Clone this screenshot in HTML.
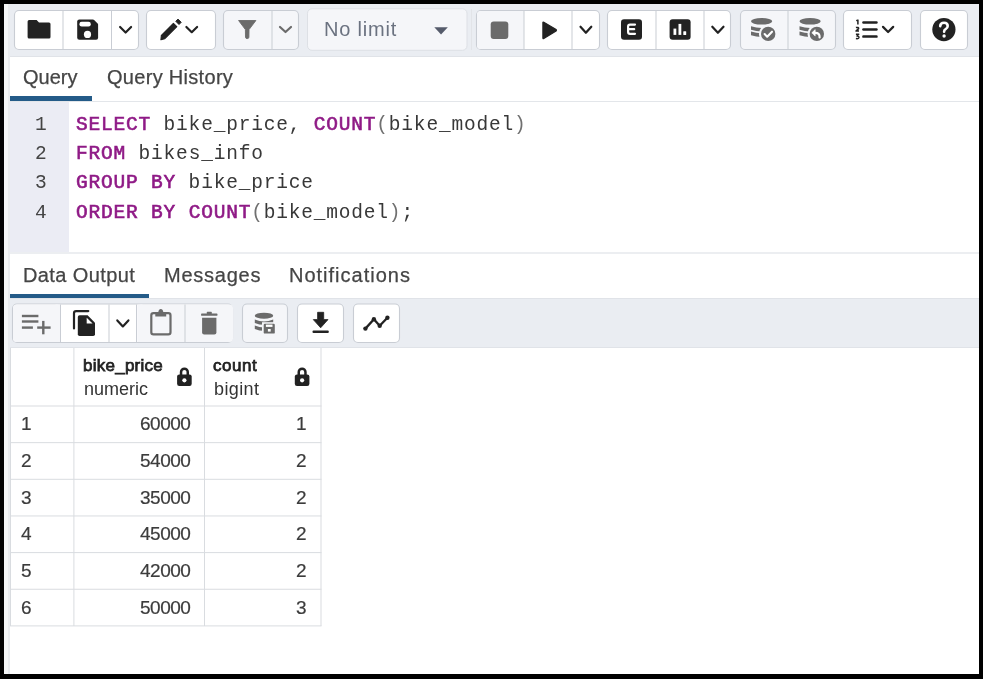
<!DOCTYPE html>
<html><head><meta charset="utf-8">
<style>
*{box-sizing:border-box;margin:0;padding:0}
html,body{width:983px;height:679px;overflow:hidden;background:#000}
body{position:relative;font-family:"Liberation Sans",sans-serif}
div{position:absolute}
.t{white-space:nowrap;line-height:1;-webkit-font-smoothing:antialiased;will-change:transform}
.kw{color:#8f1a86;font-weight:normal;-webkit-text-stroke:0.6px #8f1a86}
.pn{color:#707070}
svg{position:absolute;left:0;top:0}
</style></head><body>
<div style="left:4px;top:4px;width:975px;height:670px;background:#fff;"></div>
<div style="left:4px;top:4px;width:5px;height:670px;background:#f4f5f6;"></div>
<div style="left:8px;top:4px;width:2px;height:670px;background:#e8eaed;"></div>
<div style="left:10px;top:4px;width:969px;height:52px;background:#eaedf2;"></div>
<div style="left:10px;top:56px;width:969px;height:1px;background:#e0e3e8;"></div>
<div style="left:10px;top:101px;width:969px;height:1px;background:#e3e6ea;"></div>
<div style="left:10px;top:96px;width:82px;height:4.5px;background:#245b88;"></div>
<div style="left:10px;top:102px;width:59px;height:150px;background:#ebecf4;"></div>
<div style="left:10px;top:252px;width:969px;height:2px;background:#eceef1;"></div>
<div style="left:10px;top:294px;width:139px;height:4px;background:#245b88;"></div>
<div style="left:10px;top:298px;width:969px;height:50px;background:#eaedf2;"></div>
<div style="left:10px;top:298px;width:969px;height:1px;background:#e0e3e8;"></div>
<div style="left:10px;top:347px;width:969px;height:1px;background:#e0e3e8;"></div>
<svg width="983" height="679" viewBox="0 0 983 679">
<rect x="14.5" y="10.5" width="124" height="39" rx="4.5" fill="#fff" stroke="#c9cdd4" stroke-width="1.1"/>
<rect x="62.5" y="11" width="1" height="38" fill="#c9cdd4"/>
<rect x="111.0" y="11" width="1" height="38" fill="#c9cdd4"/>
<rect x="146.5" y="10.5" width="69" height="39" rx="4.5" fill="#fff" stroke="#c9cdd4" stroke-width="1.1"/>
<rect x="223.5" y="10.5" width="75" height="39" rx="4.5" fill="#f5f6f9" stroke="#c9cdd4" stroke-width="1.1"/>
<rect x="271.5" y="11" width="1" height="38" fill="#c9cdd4"/>
<rect x="307.5" y="8.8" width="159.5" height="41.5" rx="4.5" fill="#f5f6f9" stroke="#dde0e5" stroke-width="1"/>
<rect x="471" y="9" width="1" height="41" fill="#e2e4e8"/>
<rect x="476.5" y="10.5" width="123" height="39" rx="4.5" fill="#fff" stroke="#c9cdd4" stroke-width="1.1"/>
<rect x="477" y="11" width="47" height="38" rx="3.5" fill="#f5f6f9"/>
<rect x="519" y="11" width="5" height="38" fill="#f5f6f9"/>
<rect x="523.5" y="11" width="1" height="38" fill="#c9cdd4"/>
<rect x="571.5" y="11" width="1" height="38" fill="#c9cdd4"/>
<rect x="607.5" y="10.5" width="123" height="39" rx="4.5" fill="#fff" stroke="#c9cdd4" stroke-width="1.1"/>
<rect x="655.5" y="11" width="1" height="38" fill="#c9cdd4"/>
<rect x="703.5" y="11" width="1" height="38" fill="#c9cdd4"/>
<rect x="740.5" y="10.5" width="95" height="39" rx="4.5" fill="#f5f6f9" stroke="#c9cdd4" stroke-width="1.1"/>
<rect x="787.5" y="11" width="1" height="38" fill="#c9cdd4"/>
<rect x="843.5" y="10.5" width="68" height="39" rx="4.5" fill="#fff" stroke="#c9cdd4" stroke-width="1.1"/>
<rect x="920.5" y="10.5" width="47" height="39" rx="4.5" fill="#fff" stroke="#c9cdd4" stroke-width="1.1"/>
<path d="M27.6 21.4 Q27.6 19.9 29.1 19.9 L36.6 19.9 L39 22.6 L49 22.6 Q50.5 22.6 50.5 24.1 L50.5 37.1 Q50.5 38.6 49 38.6 L29.1 38.6 Q27.6 38.6 27.6 37.1 Z" fill="#222"/>
<path d="M77.2 21.6 Q77.2 19.5 79.3 19.5 L93 19.5 Q93.6 19.5 94.1 20 L97.6 23.5 Q98.1 24 98.1 24.7 L98.1 37.8 Q98.1 39.8 96.1 39.8 L79.3 39.8 Q77.2 39.8 77.2 37.8 Z" fill="#222"/>
<rect x="79.4" y="21.8" width="11.4" height="4.7" rx="2.3" fill="#fff"/>
<circle cx="87.5" cy="34.4" r="3.6" fill="#fff"/>
<polyline points="120.1,27 125.6,32.5 131.1,27" fill="none" stroke="#222" stroke-width="2.2" stroke-linecap="round" stroke-linejoin="round"/>
<path d="M161.4 35.3 L173.4 23.3 L176.8 26.7 L164.8 38.7 L160.9 39.8 Z" fill="#222" stroke="#222" stroke-width="1.1" stroke-linejoin="round"/>
<path d="M175.8 21.3 L178 19.1 L181.2 22.3 L179 24.5 Z" fill="#222" stroke="#222" stroke-width="1" stroke-linejoin="round"/>
<polyline points="186.4,27 191.75,32.199999999999996 197.1,27" fill="none" stroke="#222" stroke-width="2.2" stroke-linecap="round" stroke-linejoin="round"/>
<path d="M238.6 20.5 L255.9 20.5 L249 29.6 L248.9 37.2 Q248.8 38.6 247.2 38.6 Q245.6 38.6 245.5 37.2 L245.4 29.6 Z" fill="#6b6b6b" stroke="#6b6b6b" stroke-width="0.9" stroke-linejoin="round"/>
<polyline points="280,27 285.5,32.0 291,27" fill="none" stroke="#6b6b6b" stroke-width="2.2" stroke-linecap="round" stroke-linejoin="round"/>
<path d="M434.3 27.3 L447.8 27.3 L441.05 34.6 Z" fill="#555b6b"/>
<rect x="490.7" y="21.5" width="17.6" height="17.4" rx="3" fill="#6b6b6b"/>
<path d="M542.9 22.6 Q542.9 21.7 543.8 22.2 L556.1 29.5 Q556.8 30.3 556.1 31 L543.8 38.5 Q542.9 39 542.9 38.1 Z" fill="#222" stroke="#222" stroke-width="1.2" stroke-linejoin="round"/>
<polyline points="580.5,26.7 585.9,32.8 591.3,26.7" fill="none" stroke="#222" stroke-width="2.2" stroke-linecap="round" stroke-linejoin="round"/>
<rect x="621" y="19.3" width="21" height="20.5" rx="3" fill="#222"/>
<path d="M635 24.6 L630 24.6 Q628.1 24.6 628.1 26.5 L628.1 31.9 Q628.1 33.8 630 33.8 L635 33.8 M628.4 29.2 L634.2 29.2" fill="none" stroke="#fff" stroke-width="2.2" stroke-linecap="round"/>
<rect x="669.6" y="19.3" width="21" height="20.5" rx="3" fill="#222"/>
<rect x="673.5" y="28.6" width="2.8" height="6.3" fill="#fff"/>
<rect x="678.5" y="23.9" width="2.8" height="11" fill="#fff"/>
<rect x="683.3" y="31.2" width="2.9" height="3.7" rx="0.5" fill="#fff"/>
<polyline points="712.3,26.7 717.9,32.8 723.5,26.7" fill="none" stroke="#222" stroke-width="2.2" stroke-linecap="round" stroke-linejoin="round"/>
<ellipse cx="761.6" cy="21.3" rx="10.6" ry="3.3" fill="#6b6b6b"/>
<path d="M751 26.2 Q761.6 29.6 772.2 26.2 L772.2 29.8 Q761.6 33.2 751 29.8 Z" fill="#6b6b6b"/>
<path d="M751 31.6 Q761.6 35 772.2 31.6 L772.2 35.2 Q761.6 38.6 751 35.2 Z" fill="#6b6b6b"/>
<circle cx="768.2" cy="33.9" r="9.3" fill="#f5f6f9"/>
<circle cx="768.2" cy="33.9" r="7.2" fill="#6b6b6b"/>
<polyline points="764.6,34.1 767.2,36.699999999999996 772.0,31.7" fill="none" stroke="#fff" stroke-width="2.1" stroke-linecap="round" stroke-linejoin="round"/>
<ellipse cx="810.1" cy="21.3" rx="10.6" ry="3.3" fill="#6b6b6b"/>
<path d="M799.5 26.2 Q810.1 29.6 820.7 26.2 L820.7 29.8 Q810.1 33.2 799.5 29.8 Z" fill="#6b6b6b"/>
<path d="M799.5 31.6 Q810.1 35 820.7 31.6 L820.7 35.2 Q810.1 38.6 799.5 35.2 Z" fill="#6b6b6b"/>
<circle cx="816.8" cy="33.9" r="9.3" fill="#f5f6f9"/>
<circle cx="816.8" cy="33.9" r="7.2" fill="#6b6b6b"/>
<path d="M811.8 32.8 L815.1999999999999 29.599999999999998 L815.1999999999999 36.0 Z" fill="#fff" stroke="#fff" stroke-width="0.6" stroke-linejoin="round"/>
<path d="M814.5999999999999 32.8 Q820.0 32.5 819.5999999999999 37.5" fill="none" stroke="#fff" stroke-width="2.2" stroke-linecap="round"/>
<rect x="862.2" y="21.15" width="15.5" height="2.5" rx="1.2" fill="#222"/>
<rect x="862.2" y="28.25" width="15.5" height="2.5" rx="1.2" fill="#222"/>
<rect x="862.2" y="35.35" width="15.5" height="2.5" rx="1.2" fill="#222"/>
<path d="M856.2 20.6 L857.9 20.1 L857.9 24.4" fill="none" stroke="#222" stroke-width="1.5" stroke-linejoin="round"/>
<path d="M855.9 27.6 Q858.9 26.9 858.6 28.6 L856 31.1 L859 31.1" fill="none" stroke="#222" stroke-width="1.5" stroke-linejoin="round"/>
<path d="M855.9 34.3 L858.7 34.3 L857 36.1 Q859.2 36.2 858.9 37.7 Q858.4 39 855.9 38.5" fill="none" stroke="#222" stroke-width="1.5" stroke-linejoin="round"/>
<polyline points="883,26.9 888.1,32.0 893.2,26.9" fill="none" stroke="#222" stroke-width="2.2" stroke-linecap="round" stroke-linejoin="round"/>
<circle cx="943.9" cy="29.55" r="11.6" fill="#222"/>
<path d="M940.2 26.2 Q940.4 22.8 944 22.8 Q947.7 22.8 947.7 26 Q947.7 28 945.6 29.2 Q944.1 30 944.1 31.8" fill="none" stroke="#fff" stroke-width="2.6" stroke-linecap="round"/>
<circle cx="944.1" cy="36" r="1.7" fill="#fff"/>
<rect x="12.5" y="304.0" width="220" height="38.5" rx="4.5" fill="#fff" stroke="#c9cdd4" stroke-width="1.1"/>
<rect x="13" y="304.5" width="47.5" height="37.5" rx="3.5" fill="#f5f6f9"/>
<rect x="55.5" y="304.5" width="5" height="37.5" fill="#f5f6f9"/>
<rect x="137.5" y="304.5" width="95.5" height="37.5" rx="3.5" fill="#f5f6f9"/>
<rect x="137.5" y="304.5" width="5" height="37.5" fill="#f5f6f9"/>
<rect x="60.0" y="304.5" width="1" height="37.5" fill="#c9cdd4"/>
<rect x="108.5" y="304.5" width="1" height="37.5" fill="#c9cdd4"/>
<rect x="136.0" y="304.5" width="1" height="37.5" fill="#c9cdd4"/>
<rect x="184.5" y="304.5" width="1" height="37.5" fill="#c9cdd4"/>
<rect x="242.5" y="304.0" width="45" height="38.5" rx="4.5" fill="#f5f6f9" stroke="#c9cdd4" stroke-width="1.1"/>
<rect x="297.5" y="304.0" width="46" height="38.5" rx="4.5" fill="#fff" stroke="#c9cdd4" stroke-width="1.1"/>
<rect x="353.5" y="304.0" width="46" height="38.5" rx="4.5" fill="#fff" stroke="#c9cdd4" stroke-width="1.1"/>
<rect x="21.9" y="314.8" width="16.5" height="2.4" fill="#6b6b6b"/>
<rect x="21.9" y="320.3" width="16.5" height="2.4" fill="#6b6b6b"/>
<rect x="21.9" y="326.40000000000003" width="11.0" height="2.4" fill="#6b6b6b"/>
<rect x="37.2" y="326.4" width="13.4" height="2.4" fill="#6b6b6b"/>
<rect x="42.1" y="320.9" width="2.4" height="13.4" fill="#6b6b6b"/>
<path d="M74 328.4 L74 313.2 Q74 311.1 76.1 311.1 L88.3 311.1" fill="none" stroke="#222" stroke-width="2.2" stroke-linecap="round"/>
<path d="M79.6 315.2 L87.6 315.2 L95 322.7 L95 334.2 Q95 336 93.2 336 L79.6 336 Q77.8 336 77.8 334.2 L77.8 317 Q77.8 315.2 79.6 315.2 Z" fill="#222"/>
<path d="M86.7 317.8 L86.7 323.6 L92.6 323.6 Z" fill="#fff"/>
<polyline points="117.3,320.4 122.85,326.40000000000003 128.4,320.4" fill="none" stroke="#222" stroke-width="2.2" stroke-linecap="round" stroke-linejoin="round"/>
<rect x="151.3" y="313.2" width="19.2" height="21.2" rx="2.2" fill="none" stroke="#6b6b6b" stroke-width="2.2"/>
<path d="M155.3 312 L158.3 312 Q158.8 309 160.8 309 Q162.8 309 163.3 312 L166.2 312 L166.2 316.4 L155.3 316.4 Z" fill="#6b6b6b"/>
<rect x="201.1" y="313.6" width="16.3" height="2.2" rx="0.6" fill="#6b6b6b"/>
<rect x="206.8" y="311.8" width="5" height="2.2" rx="0.6" fill="#6b6b6b"/>
<path d="M202.1 317.7 L216.4 317.7 L216.4 332.5 Q216.4 334.5 214.4 334.5 L204.1 334.5 Q202.1 334.5 202.1 332.5 Z" fill="#6b6b6b"/>
<ellipse cx="264" cy="315.7" rx="9.2" ry="3" fill="#6b6b6b"/>
<path d="M254.8 319.5 Q264 323.3 273.2 319.5 L273.2 322.9 Q264 326.7 254.8 322.9 Z" fill="#6b6b6b"/>
<path d="M254.8 325.5 Q264 329.3 273.2 325.5 L273.2 328.9 Q264 332.7 254.8 328.9 Z" fill="#6b6b6b"/>
<rect x="262" y="322.2" width="14.5" height="13" fill="#f5f6f9"/>
<rect x="263.7" y="323.8" width="11.1" height="9.8" rx="1.2" fill="#6b6b6b"/>
<rect x="265.9" y="324.6" width="6.6" height="2.3" fill="#fff"/>
<rect x="267.9" y="329" width="2.8" height="2.6" fill="#fff"/>
<path d="M317.6 312.3 L323.7 312.3 L323.7 319.6 L328 319.6 L320.65 327.8 L313.3 319.6 L317.6 319.6 Z" fill="#222" stroke="#222" stroke-width="0.8" stroke-linejoin="round"/>
<rect x="312.5" y="330.6" width="16.3" height="2.4" rx="1" fill="#222"/>
<polyline points="365.4,328.6 373.9,319.3 379.7,325.8 387.4,317.7" fill="none" stroke="#222" stroke-width="2.3" stroke-linejoin="round"/>
<circle cx="365.4" cy="328.6" r="2.2" fill="#222"/>
<circle cx="373.9" cy="319.3" r="2.2" fill="#222"/>
<circle cx="379.7" cy="325.8" r="2.2" fill="#222"/>
<circle cx="387.4" cy="317.7" r="2.2" fill="#222"/>
<rect x="10.0" y="348" width="1" height="278" fill="#d9dce0"/>
<rect x="73.4" y="348" width="1" height="278" fill="#d9dce0"/>
<rect x="204.0" y="348" width="1" height="278" fill="#d9dce0"/>
<rect x="320.5" y="348" width="1" height="278" fill="#d9dce0"/>
<rect x="10" y="405.5" width="311.5" height="1" fill="#d9dce0"/>
<rect x="10" y="442.15" width="311.5" height="1" fill="#d9dce0"/>
<rect x="10" y="478.8" width="311.5" height="1" fill="#d9dce0"/>
<rect x="10" y="515.45" width="311.5" height="1" fill="#d9dce0"/>
<rect x="10" y="552.1" width="311.5" height="1" fill="#d9dce0"/>
<rect x="10" y="588.75" width="311.5" height="1" fill="#d9dce0"/>
<rect x="10" y="625.4" width="311.5" height="1" fill="#d9dce0"/>
<path d="M181.05 375.0 L181.05 372.1 A3.35 3.35 0 0 1 187.75 372.1 L187.75 375.0" fill="none" stroke="#222" stroke-width="2.5"/>
<rect x="177.1" y="374.4" width="14.6" height="11.5" rx="2.2" fill="#222"/>
<circle cx="184.4" cy="380.3" r="2.1" fill="#fff"/>
<path d="M298.75 375.0 L298.75 372.1 A3.35 3.35 0 0 1 305.45000000000005 372.1 L305.45000000000005 375.0" fill="none" stroke="#222" stroke-width="2.5"/>
<rect x="294.8" y="374.4" width="14.6" height="11.5" rx="2.2" fill="#222"/>
<circle cx="302.1" cy="380.3" r="2.1" fill="#fff"/>
</svg>
<div class="t" style="left:323.5px;top:19px;font-size:20px;color:#6b7280;font-weight:normal;font-family:'Liberation Sans',sans-serif;letter-spacing:0.8px;">No limit</div>
<div class="t" style="left:22.5px;top:67px;font-size:20px;color:#454545;font-weight:normal;font-family:'Liberation Sans',sans-serif;letter-spacing:0px;-webkit-text-stroke:0.25px #454545;">Query</div>
<div class="t" style="left:107px;top:67px;font-size:20px;color:#454545;font-weight:normal;font-family:'Liberation Sans',sans-serif;letter-spacing:0.3px;-webkit-text-stroke:0.25px #454545;">Query History</div>
<div class="t" style="left:35px;top:115.6px;font-size:19.5px;color:#444;font-weight:normal;font-family:'Liberation Mono',monospace;letter-spacing:0px;">1</div>
<div class="t" style="left:35px;top:144.93px;font-size:19.5px;color:#444;font-weight:normal;font-family:'Liberation Mono',monospace;letter-spacing:0px;">2</div>
<div class="t" style="left:35px;top:174.26px;font-size:19.5px;color:#444;font-weight:normal;font-family:'Liberation Mono',monospace;letter-spacing:0px;">3</div>
<div class="t" style="left:35px;top:203.58999999999997px;font-size:19.5px;color:#444;font-weight:normal;font-family:'Liberation Mono',monospace;letter-spacing:0px;">4</div>
<div class="t" style="left:76px;top:115.6px;font-size:19.5px;color:#383838;font-weight:normal;font-family:'Liberation Mono',monospace;letter-spacing:0.811px;white-space:pre;"><b class="kw">SELECT</b> bike_price, <b class="kw">COUNT</b><span class="pn">(</span>bike_model<span class="pn">)</span></div>
<div class="t" style="left:76px;top:144.93px;font-size:19.5px;color:#383838;font-weight:normal;font-family:'Liberation Mono',monospace;letter-spacing:0.811px;white-space:pre;"><b class="kw">FROM</b> bikes_info</div>
<div class="t" style="left:76px;top:174.26px;font-size:19.5px;color:#383838;font-weight:normal;font-family:'Liberation Mono',monospace;letter-spacing:0.811px;white-space:pre;"><b class="kw">GROUP BY</b> bike_price</div>
<div class="t" style="left:76px;top:203.58999999999997px;font-size:19.5px;color:#383838;font-weight:normal;font-family:'Liberation Mono',monospace;letter-spacing:0.811px;white-space:pre;"><b class="kw">ORDER BY</b> <b class="kw">COUNT</b><span class="pn">(</span>bike_model<span class="pn">)</span>;</div>
<div class="t" style="left:22.8px;top:264.6px;font-size:20px;color:#454545;font-weight:normal;font-family:'Liberation Sans',sans-serif;letter-spacing:0.4px;-webkit-text-stroke:0.25px #454545;">Data Output</div>
<div class="t" style="left:163.5px;top:264.6px;font-size:20px;color:#454545;font-weight:normal;font-family:'Liberation Sans',sans-serif;letter-spacing:0.75px;-webkit-text-stroke:0.25px #454545;">Messages</div>
<div class="t" style="left:288.5px;top:264.6px;font-size:20px;color:#454545;font-weight:normal;font-family:'Liberation Sans',sans-serif;letter-spacing:1.0px;-webkit-text-stroke:0.25px #454545;">Notifications</div>
<div class="t" style="left:83.3px;top:356.5px;font-size:17px;color:#222;font-weight:normal;font-family:'Liberation Sans',sans-serif;letter-spacing:0.25px;-webkit-text-stroke:0.75px #222;">bike_price</div>
<div class="t" style="left:83.5px;top:380px;font-size:18px;color:#333;font-weight:normal;font-family:'Liberation Sans',sans-serif;letter-spacing:0px;">numeric</div>
<div class="t" style="left:213.3px;top:356.5px;font-size:17px;color:#222;font-weight:normal;font-family:'Liberation Sans',sans-serif;letter-spacing:0.55px;-webkit-text-stroke:0.75px #222;">count</div>
<div class="t" style="left:213.5px;top:380px;font-size:18px;color:#333;font-weight:normal;font-family:'Liberation Sans',sans-serif;letter-spacing:0.4px;">bigint</div>
<div class="t" style="left:20.5px;top:414.3px;font-size:19px;color:#3c3c3c;font-weight:normal;font-family:'Liberation Sans',sans-serif;letter-spacing:0px;-webkit-text-stroke:0.2px #3c3c3c;">1</div>
<div class="t" style="right:792.5px;top:414.3px;font-size:19px;color:#3c3c3c;font-weight:normal;letter-spacing:-0.5px;-webkit-text-stroke:0.2px #3c3c3c;">60000</div>
<div class="t" style="right:676.5px;top:414.3px;font-size:19px;color:#3c3c3c;font-weight:normal;letter-spacing:0px;-webkit-text-stroke:0.2px #3c3c3c;">1</div>
<div class="t" style="left:20.5px;top:450.95px;font-size:19px;color:#3c3c3c;font-weight:normal;font-family:'Liberation Sans',sans-serif;letter-spacing:0px;-webkit-text-stroke:0.2px #3c3c3c;">2</div>
<div class="t" style="right:792.5px;top:450.95px;font-size:19px;color:#3c3c3c;font-weight:normal;letter-spacing:-0.5px;-webkit-text-stroke:0.2px #3c3c3c;">54000</div>
<div class="t" style="right:676.5px;top:450.95px;font-size:19px;color:#3c3c3c;font-weight:normal;letter-spacing:0px;-webkit-text-stroke:0.2px #3c3c3c;">2</div>
<div class="t" style="left:20.5px;top:487.6px;font-size:19px;color:#3c3c3c;font-weight:normal;font-family:'Liberation Sans',sans-serif;letter-spacing:0px;-webkit-text-stroke:0.2px #3c3c3c;">3</div>
<div class="t" style="right:792.5px;top:487.6px;font-size:19px;color:#3c3c3c;font-weight:normal;letter-spacing:-0.5px;-webkit-text-stroke:0.2px #3c3c3c;">35000</div>
<div class="t" style="right:676.5px;top:487.6px;font-size:19px;color:#3c3c3c;font-weight:normal;letter-spacing:0px;-webkit-text-stroke:0.2px #3c3c3c;">2</div>
<div class="t" style="left:20.5px;top:524.25px;font-size:19px;color:#3c3c3c;font-weight:normal;font-family:'Liberation Sans',sans-serif;letter-spacing:0px;-webkit-text-stroke:0.2px #3c3c3c;">4</div>
<div class="t" style="right:792.5px;top:524.25px;font-size:19px;color:#3c3c3c;font-weight:normal;letter-spacing:-0.5px;-webkit-text-stroke:0.2px #3c3c3c;">45000</div>
<div class="t" style="right:676.5px;top:524.25px;font-size:19px;color:#3c3c3c;font-weight:normal;letter-spacing:0px;-webkit-text-stroke:0.2px #3c3c3c;">2</div>
<div class="t" style="left:20.5px;top:560.9px;font-size:19px;color:#3c3c3c;font-weight:normal;font-family:'Liberation Sans',sans-serif;letter-spacing:0px;-webkit-text-stroke:0.2px #3c3c3c;">5</div>
<div class="t" style="right:792.5px;top:560.9px;font-size:19px;color:#3c3c3c;font-weight:normal;letter-spacing:-0.5px;-webkit-text-stroke:0.2px #3c3c3c;">42000</div>
<div class="t" style="right:676.5px;top:560.9px;font-size:19px;color:#3c3c3c;font-weight:normal;letter-spacing:0px;-webkit-text-stroke:0.2px #3c3c3c;">2</div>
<div class="t" style="left:20.5px;top:597.55px;font-size:19px;color:#3c3c3c;font-weight:normal;font-family:'Liberation Sans',sans-serif;letter-spacing:0px;-webkit-text-stroke:0.2px #3c3c3c;">6</div>
<div class="t" style="right:792.5px;top:597.55px;font-size:19px;color:#3c3c3c;font-weight:normal;letter-spacing:-0.5px;-webkit-text-stroke:0.2px #3c3c3c;">50000</div>
<div class="t" style="right:676.5px;top:597.55px;font-size:19px;color:#3c3c3c;font-weight:normal;letter-spacing:0px;-webkit-text-stroke:0.2px #3c3c3c;">3</div>
</body></html>
